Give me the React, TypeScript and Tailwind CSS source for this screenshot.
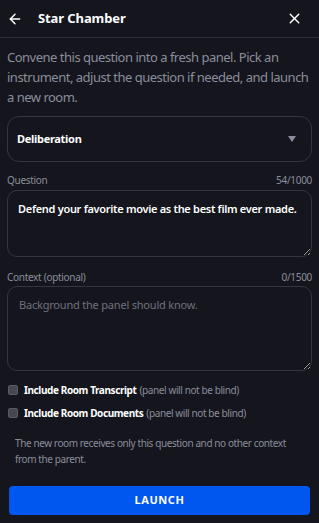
import React, { useState } from 'react';
import { ArrowLeft, X } from 'lucide-react';

const App: React.FC = () => {
  const [question, setQuestion] = useState('Defend your favorite movie as the best film ever made.');
  const [context, setContext] = useState('');
  const [transcript, setTranscript] = useState(false);
  const [docs, setDocs] = useState(false);

  return (
    <div className="w-[319px] h-[523px] bg-[#15161d] text-white flex flex-col overflow-hidden" style={{ fontFamily: '"Noto Sans", "Open Sans", sans-serif' }}>
      {/* Header */}
      <div className="h-[38px] shrink-0 flex items-center border-b border-[#2c2d35] pl-[7px] pr-[16px]">
        <ArrowLeft size={16} strokeWidth={2.2} className="text-white" />
        <span className="ml-[15px] text-[13px] font-bold tracking-[-0.1px]">Star Chamber</span>
        <X size={17} strokeWidth={2} className="ml-auto text-white" />
      </div>

      <div className="flex flex-col px-[7px]">
        <p className="mt-[9px] -mr-[3px] text-[13px] leading-[20px] tracking-[-0.5px] text-[#8a8d9b]">
          Convene this question into a fresh panel. Pick an instrument, adjust the question if needed, and launch a new room.
        </p>

        {/* Instrument select */}
        <div className="mt-[9px] h-[46px] rounded-[12px] border border-[#34353d] flex items-center px-[9px]">
          <span className="text-[11px] font-bold tracking-[-0.3px] text-white">Deliberation</span>
          <svg width="8" height="6" viewBox="0 0 8 6" className="ml-auto mr-[6px]">
            <path d="M0 0 L8 0 L4 6 Z" fill="#8a8d9b" />
          </svg>
        </div>

        {/* Question */}
        <div className="mt-[11px] flex justify-between text-[10px] leading-[14px] tracking-[-0.3px] text-[#8a8d9b]">
          <span>Question</span>
          <span>{question.length}/1000</span>
        </div>
        <textarea
          value={question}
          onChange={(e) => setQuestion(e.target.value)}
          className="mt-[3px] h-[67px] w-full rounded-[10px] border border-[#34353d] bg-transparent px-[10px] py-[10px] text-[11px] leading-[16px] tracking-[-0.3px] font-semibold text-white outline-none"
        />

        {/* Context */}
        <div className="mt-[13px] flex justify-between text-[10px] leading-[14px] tracking-[-0.3px] text-[#8a8d9b]">
          <span>Context (optional)</span>
          <span>{context.length}/1500</span>
        </div>
        <textarea
          value={context}
          onChange={(e) => setContext(e.target.value)}
          placeholder="Background the panel should know."
          className="mt-[2px] h-[85px] w-full rounded-[10px] border border-[#34353d] bg-transparent px-[11px] py-[10px] text-[11px] leading-[16px] tracking-[-0.2px] text-white placeholder:text-[#6e717c] outline-none"
        />

        {/* Options */}
        <label className="mt-[12px] flex items-center text-[10px] leading-[14px]">
          <input type="checkbox" checked={transcript} onChange={() => setTranscript(!transcript)} className="appearance-none w-[10px] h-[10px] ml-[1px] rounded-[2px] bg-[#46474f] border border-[#5a5b63]" />
          <span className="ml-[6px] font-bold tracking-[-0.4px] text-white">Include Room Transcript</span>
          <span className="ml-[3px] tracking-[-0.4px] text-[#8a8d9b]">(panel will not be blind)</span>
        </label>
        <label className="mt-[9px] flex items-center text-[10px] leading-[14px]">
          <input type="checkbox" checked={docs} onChange={() => setDocs(!docs)} className="appearance-none w-[10px] h-[10px] ml-[1px] rounded-[2px] bg-[#46474f] border border-[#5a5b63]" />
          <span className="ml-[6px] font-bold tracking-[-0.4px] text-white">Include Room Documents</span>
          <span className="ml-[3px] tracking-[-0.4px] text-[#8a8d9b]">(panel will not be blind)</span>
        </label>

        <p className="mt-[15px] px-[8px] text-[10px] leading-[16px] tracking-[-0.4px] text-[#8a8d9b]">
          The new room receives only this question and no other context from the parent.
        </p>

        <button className="mt-[19px] mx-[2px] h-[29px] rounded-[4px] bg-[#0057f0] text-[11px] font-bold tracking-[0.6px] text-white">
          LAUNCH
        </button>
      </div>
    </div>
  );
};

export default App;
